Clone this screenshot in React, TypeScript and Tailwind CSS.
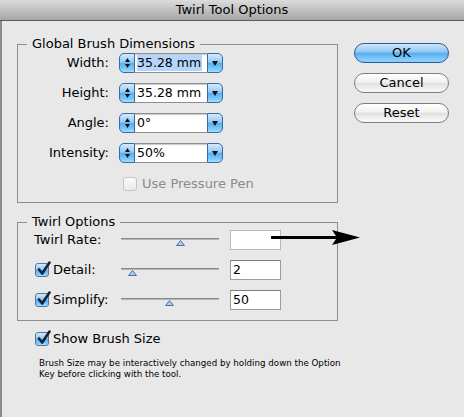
const aquaBlue =
  "bg-[linear-gradient(#d3eafc,#93cbf6_45%,#5aaef0_52%,#7ccbfb_85%,#a8e0fd)]";

function Stepper() {
  return (
    <div className={`w-[16px] h-[20px] rounded-l-[5px] border border-[#3a6aa3] ${aquaBlue} flex flex-col items-center justify-center gap-[2px]`}>
      <svg width="5" height="4" viewBox="0 0 5 4">
        <path d="M2.5 0L5 4H0z" fill="#111" />
      </svg>
      <svg width="5" height="4" viewBox="0 0 5 4">
        <path d="M0 0H5L2.5 4z" fill="#111" />
      </svg>
    </div>
  );
}

function DropButton() {
  return (
    <div className={`w-[16px] h-[20px] rounded-r-[5px] border border-[#3a6aa3] ${aquaBlue} flex items-center justify-center`}>
      <svg width="6" height="5" viewBox="0 0 6 5">
        <path d="M0 0H6L3 5z" fill="#111" />
      </svg>
    </div>
  );
}

function ComboField({ label, value, selected }: { label: string; value: string; selected?: boolean }) {
  return (
    <div className="flex items-center h-[20px]">
      <span className="w-[91px] text-right text-[13px]">{label}</span>
      <div className="ml-[10px] flex">
        <Stepper />
        <div className="w-[72px] h-[20px] bg-white border-y border-[#8f8f8f] shadow-[inset_0_1px_1px_#c8c8c8] flex items-center pl-[2px] text-[12.5px]">
          <span className={selected ? "bg-[#b4d4fb] pr-[1px]" : ""}>{value}</span>
        </div>
        <DropButton />
      </div>
    </div>
  );
}

function Check({ checked = true, disabled = false }: { checked?: boolean; disabled?: boolean }) {
  if (disabled) {
    return (
      <div className="w-[14px] h-[14px] rounded-[3px] border border-[#c4c4c4] bg-[linear-gradient(#fbfbfb,#e9e9e9)]" />
    );
  }
  return (
    <div className={`relative w-[14px] h-[14px] rounded-[3px] border border-[#5475a0] ${aquaBlue}`}>
      {checked && (
        <svg className="absolute left-[1px] top-[-3px]" width="14" height="15" viewBox="0 0 14 15">
          <path d="M2 8.5L5.2 12.5L12.5 1.5" fill="none" stroke="#16213a" strokeWidth="2.6" strokeLinecap="round" strokeLinejoin="round" />
        </svg>
      )}
    </div>
  );
}

function Slider({ thumb }: { thumb: number }) {
  return (
    <div className="relative w-[98px] h-[20px]">
      <div className="absolute left-0 right-0 top-[8px] h-[2px] bg-[#8a8a8a] border-b border-[#b5b5b5]" />
      <svg className="absolute top-[10px]" style={{ left: thumb }} width="9" height="6" viewBox="0 0 9 6">
        <path d="M4.5 0.5L8.5 5.5H0.5z" fill="#a9cdf2" stroke="#4d6fa8" strokeWidth="1" />
      </svg>
    </div>
  );
}

function TwirlRow({ label, value, thumb, check, faint }: { label: string; value: string; thumb: number; check?: boolean; faint?: boolean }) {
  return (
    <div className="flex items-center h-[20px]">
      <div className="w-[103px] flex items-center">
        {check ? (
          <>
            <div className="ml-[17px]">
              <Check />
            </div>
            <span className="ml-[4px] text-[13px]">{label}</span>
          </>
        ) : (
          <span className="ml-[16px] text-[13px]">{label}</span>
        )}
      </div>
      <Slider thumb={thumb} />
      <div
        className={
          faint
            ? "ml-[11px] w-[51px] h-[20px] bg-white border border-[#b9b9b9] flex items-center pl-[2px] text-[12.5px]"
            : "ml-[11px] w-[51px] h-[20px] bg-white border border-[#9c9c9c] border-t-[#7d7d7d] flex items-center pl-[2px] text-[12.5px]"
        }
      >
        {value}
      </div>
    </div>
  );
}

function Button({ children, primary }: { children: string; primary?: boolean }) {
  return (
    <div
      className={
        primary
          ? "w-[95px] h-[20px] rounded-full border border-[#2c5b98] bg-[linear-gradient(#cfe6fb,#8ec6f3_45%,#5aaef0_52%,#86cffb_90%)] flex items-center justify-center text-[13px]"
          : "w-[95px] h-[20px] rounded-full border border-[#7e7e7e] bg-[linear-gradient(#ffffff,#f1f1f1_45%,#e0e0e0_52%,#f6f6f6_90%)] flex items-center justify-center text-[13px]"
      }
    >
      {children}
    </div>
  );
}

export default function App() {
  return (
    <div className="relative w-[464px] h-[417px] bg-[#e8e8e8] flex flex-col overflow-hidden font-['DejaVu_Sans',sans-serif] text-black leading-[16px]">
      <div className="h-[21px] shrink-0 bg-[linear-gradient(#dcdcdc,#a6a6a6)] border-b border-[#5c5c5c] flex items-center justify-center text-[13px]">
        Twirl Tool Options
      </div>

      <div className="flex flex-1 items-start border-l-2 border-[#8b8b8b]">
        <div className="pl-[15px] w-[338px]">
          <fieldset className="mt-[15px] w-[321px] border border-[#8e8e8e] pt-[1px] pb-[10px] flex flex-col">
            <legend className="ml-[9px] px-[5px] text-[13px] leading-[16px]">Global Brush Dimensions</legend>
            <div className="flex flex-col gap-[10px]">
              <ComboField label="Width:" value="35.28 mm" selected />
              <ComboField label="Height:" value="35.28 mm" />
              <ComboField label="Angle:" value="0°" />
              <ComboField label="Intensity:" value="50%" />
            </div>
            <div className="mt-[13px] ml-[105px] flex items-center gap-[5px]">
              <Check disabled />
              <span className="text-[13px] text-[#8a8a8a]">Use Pressure Pen</span>
            </div>
          </fieldset>

          <fieldset className="mt-[11px] w-[321px] border border-[#8e8e8e] pb-[10px]">
            <legend className="ml-[9px] px-[5px] text-[13px] leading-[16px]">Twirl Options</legend>
            <div className="flex flex-col gap-[10px]">
              <TwirlRow label="Twirl Rate:" value="" thumb={55} faint />
              <TwirlRow label="Detail:" value="2" thumb={7} check />
              <TwirlRow label="Simplify:" value="50" thumb={44} check />
            </div>
          </fieldset>

          <div className="mt-[10px] ml-[18px] flex items-center gap-[4px]">
            <Check />
            <span className="text-[13px]">Show Brush Size</span>
          </div>
          <p className="mt-[11px] ml-[22px] text-[8.7px] leading-[11px] w-[310px]">
            Brush Size may be interactively changed by holding down the Option Key before clicking with the tool.
          </p>
        </div>

        <div className="ml-[14px] pt-[22px] flex flex-col gap-[10px]">
          <Button primary>OK</Button>
          <Button>Cancel</Button>
          <Button>Reset</Button>
        </div>
      </div>

      <svg className="absolute left-[271px] top-[229px]" width="90" height="17" viewBox="0 0 90 17">
        <path d="M0 8.5H66" stroke="#000" strokeWidth="3" />
        <path d="M61 1L89 8.5L61 16L66 8.5z" fill="#000" />
      </svg>
    </div>
  );
}
